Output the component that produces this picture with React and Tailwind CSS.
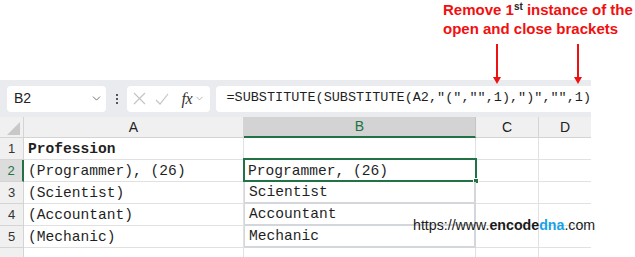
import { ChevronDown } from 'lucide-react';

const mono = "font-['Liberation_Mono','DejaVu_Sans_Mono',monospace]";
const sans = "font-['Liberation_Sans',Arial,sans-serif]";

const rows = [
  { n: 1, a: 'Profession', b: '', bold: true },
  { n: 2, a: '(Programmer), (26)', b: 'Programmer, (26)' },
  { n: 3, a: '(Scientist)', b: 'Scientist' },
  { n: 4, a: '(Accountant)', b: 'Accountant' },
  { n: 5, a: '(Mechanic)', b: 'Mechanic' },
  { n: 6, a: '', b: '', hidden: true },
];

function Arrow({ x }) {
  return (
    <div className="absolute top-[44px] flex flex-col items-center" style={{ left: x - 4 }}>
      <div className="w-[2px] h-[33px] bg-[#ee1111]" />
      <svg width="8" height="7" viewBox="0 0 8 7">
        <path d="M0 0 L8 0 L4 7 Z" fill="#ee1111" />
      </svg>
    </div>
  );
}

export default function App() {
  return (
    <div className={`relative w-[635px] h-[257px] bg-white overflow-hidden ${sans}`}>
      {/* note */}
      <div className="h-[80px] pl-[443px] pt-0">
        <p className="text-[15px] leading-[19px] font-bold text-[#f01010]">
          Remove 1<sup className="text-[10px] text-[#222]">st</sup> instance of the
          <br />
          open and close brackets
        </p>
      </div>
      <Arrow x={497} />
      <Arrow x={578} />

      {/* formula bar */}
      <div className="w-[591px] h-[37px] bg-[#e9ebee] flex items-center pl-[7px]">
        <div className="w-[100px] h-[26px] bg-white rounded-[4px] flex items-center justify-between pl-[7px] pr-[3px]">
          <span className="text-[14px] text-[#222]">B2</span>
          <ChevronDown size={13} strokeWidth={1.5} className="text-[#555]" />
        </div>
        <div className="w-[22px] flex flex-col items-center gap-[2px]">
          <span className="w-[2px] h-[2px] bg-[#555]" />
          <span className="w-[2px] h-[2px] bg-[#555]" />
          <span className="w-[2px] h-[2px] bg-[#555]" />
        </div>
        <div className="w-[84px] h-[26px] bg-white rounded-[4px] flex items-center pl-[6px] gap-[9px]">
          <svg width="13" height="13" viewBox="0 0 13 13">
            <path d="M1 1 L12 12 M12 1 L1 12" stroke="#c4c4c4" strokeWidth="1.2" />
          </svg>
          <svg width="14" height="12" viewBox="0 0 14 12">
            <path d="M1 7 L5 11 L13 1" stroke="#c4c4c4" strokeWidth="1.2" fill="none" />
          </svg>
          <span className="font-['Liberation_Serif',serif] italic text-[16px] text-[#333] leading-none ml-[3px] tracking-[-0.5px]">fx</span>
          <ChevronDown size={11} strokeWidth={1.5} className="text-[#999] -ml-[7px]" />
        </div>
        <div className="ml-[6px] flex-1 h-[26px] bg-white rounded-l-[4px] flex items-center pl-[10px]">
          <span className={`${mono} text-[13.5px] text-[#1f1f1f] whitespace-pre`}>
            =SUBSTITUTE(SUBSTITUTE(A2,"(","",1),")","",1)
          </span>
        </div>
      </div>

      {/* grid */}
      <div className="w-[591px] grid grid-cols-[24px_220px_232px_63px_52px]">
        {/* header row */}
        <div className="h-[21px] bg-[#f0f0f0] border-b border-r border-[#d4d4d4] flex items-end justify-end pr-[3px] pb-[2px]">
          <svg width="13" height="13" viewBox="0 0 13 13">
            <path d="M13 0 L13 13 L0 13 Z" fill="#c8c8c8" />
          </svg>
        </div>
        <div className="h-[21px] bg-[#f0f0f0] border-b border-r border-[#d4d4d4] flex items-center justify-center text-[14px] text-[#222]">A</div>
        <div className="h-[21px] bg-[#d3d3d3] border-b-2 border-b-[#217346] border-r border-r-[#c4c4c4] flex items-center justify-center text-[14px] text-[#217346]">B</div>
        <div className="h-[21px] bg-[#f0f0f0] border-b border-r border-[#d4d4d4] flex items-center justify-center text-[14px] text-[#222]">C</div>
        <div className="h-[21px] bg-[#f0f0f0] border-b border-[#d4d4d4] flex items-center justify-center text-[14px] text-[#222]">D</div>

        {rows.map((r) => {
          const sel = r.n === 2;
          const boxed = r.n >= 3 && r.n <= 5;
          return [
            <div
              key={`n${r.n}`}
              className={`h-[22px] flex items-center justify-center text-[13px] border-b border-[#d4d4d4] ${
                sel ? 'bg-[#dcdcdc] text-[#217346] border-r-2 border-r-[#217346]' : 'bg-[#f0f0f0] text-[#333] border-r border-r-[#d4d4d4]'
              }`}
            >
              {r.hidden ? '' : r.n}
            </div>,
            <div
              key={`a${r.n}`}
              className={`h-[22px] flex items-center pl-[4px] pt-[2px] border-b border-r border-[#e1e1e1] ${mono} text-[14.6px] text-[#1f1f1f] whitespace-pre ${r.bold ? 'font-bold' : ''}`}
            >
              {r.a}
            </div>,
            <div
              key={`b${r.n}`}
              className={`relative h-[22px] flex items-center pl-[4px] pt-[2px] ${mono} text-[14.6px] text-[#1f1f1f] whitespace-pre ${
                boxed ? 'border-l border-l-[#d3d6da] border-r-2 border-r-[#d3d6da] border-b-2 border-b-[#d3d6da]' : 'border-b border-r border-[#e1e1e1]'
              }`}
            >
              {r.b}
              {sel && (
                <div className="absolute -top-[2px] -left-[1px] -right-[2px] -bottom-[1px] border-2 border-[#217346]">
                  <div className="absolute -right-[4px] -bottom-[4px] w-[6px] h-[6px] bg-[#217346] border border-white" />
                </div>
              )}
            </div>,
            <div key={`c${r.n}`} className="h-[22px] border-b border-r border-[#e1e1e1]" />,
            <div key={`d${r.n}`} className="h-[22px] border-b border-[#e1e1e1]" />,
          ];
        })}
      </div>

      {/* watermark */}
      <div className="absolute left-[413px] top-[216px] text-[14.2px] text-[#1a1a1a] leading-[18px]">
        https://www.<b className="font-bold">encode</b>
        <b className="font-bold text-[#17a2e6]">dna</b>.com
      </div>
    </div>
  );
}
